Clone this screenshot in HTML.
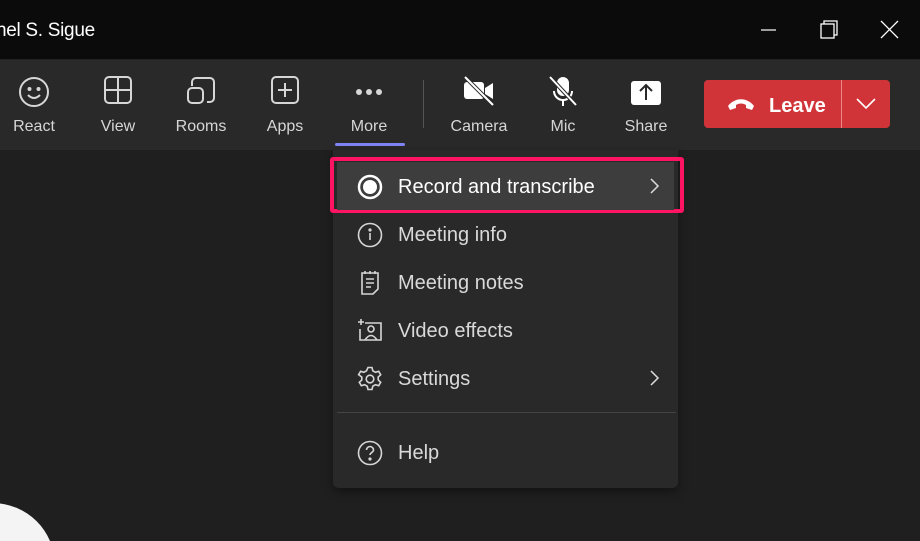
<!DOCTYPE html>
<html><head><style>
*{margin:0;padding:0;box-sizing:border-box}
html,body{width:920px;height:541px;overflow:hidden}
body{background:#1f1f1f;font-family:"Liberation Sans",sans-serif;position:relative;color:#e6e6e6}
.title{position:absolute;left:0;top:0;width:920px;height:60px;background:#0b0b0b;border-bottom:1px solid #222}
.title .t{position:absolute;left:-4px;top:20px;font-size:19px;color:#fff;letter-spacing:-0.3px}
.bar{position:absolute;left:0;top:60px;width:920px;height:90px;background:#292929}
.btn{position:absolute;top:0;width:70px;text-align:center}
.btn svg{position:absolute;top:16px;left:50%;transform:translateX(-50%)}
.btn span{position:absolute;top:58px;left:0;width:100%;font-size:16px;color:#d6d6d6}
.leave{position:absolute;left:704px;top:80px;width:186px;height:48px;background:#d13438;border-radius:4px}
.menu{position:absolute;left:333px;top:150px;width:345px;height:338px;background:#292929;border-radius:0 0 6px 6px;box-shadow:0 4px 10px rgba(0,0,0,.4)}
.item{position:absolute;left:0;width:345px;height:48px;font-size:20px;color:#d9d9d9}
.item span{position:absolute;left:65px;top:14px}
.item svg{position:absolute;left:24px;top:12px}
.item .chev{position:absolute;left:316px;top:15px}
.clip{position:absolute;left:0;top:490px;width:80px;height:51px;overflow:hidden}
</style></head><body>
<div class="title"><div class="t">hel S. Sigue</div>
<svg style="position:absolute;left:760px;top:20px" width="140" height="20"><line x1="1" y1="10" x2="16" y2="10" stroke="#fff" stroke-width="1.2"/><rect x="61" y="4" width="13" height="14" fill="none" stroke="#fff" stroke-width="1.3"/><path d="M64 4V1h13v14h-3" fill="none" stroke="#fff" stroke-width="1.3"/><path d="M121 1l17 17M138 1l-17 17" stroke="#fff" stroke-width="1.3"/></svg>
</div>
<div class="bar">
<div class="btn" style="left:-1px"><svg width="32" height="32" viewBox="0 0 32 32" fill="none" stroke="#d6d6d6" stroke-width="2"><circle cx="16" cy="16" r="14"/><circle cx="11.5" cy="13" r="1" fill="#d6d6d6"/><circle cx="20.5" cy="13" r="1" fill="#d6d6d6"/><path d="M10 19q6 6 12 0"/></svg><span>React</span></div>
<div class="btn" style="left:83px"><svg width="28" height="28" viewBox="0 0 28 28" fill="none" stroke="#d6d6d6" stroke-width="2"><rect x="1" y="1" width="26" height="26" rx="4"/><path d="M14 1v26M1 14h26"/></svg><span>View</span></div>
<div class="btn" style="left:166px"><svg width="28" height="28" viewBox="0 0 28 28" fill="none" stroke="#d6d6d6" stroke-width="2"><path d="M5 10V6a4 4 0 014-4h14a4 4 0 014 4v16a4 4 0 01-4 4h-3"/><rect x="1" y="12" width="15" height="15" rx="4"/></svg><span>Rooms</span></div>
<div class="btn" style="left:250px"><svg width="28" height="28" viewBox="0 0 28 28" fill="none" stroke="#d6d6d6" stroke-width="2"><rect x="1" y="1" width="26" height="26" rx="4"/><path d="M14 7v14M7 14h14"/></svg><span>Apps</span></div>
<div class="btn" style="left:334px"><svg width="28" height="28" viewBox="0 0 28 28" fill="#d6d6d6"><circle cx="4" cy="16" r="3"/><circle cx="14" cy="16" r="3"/><circle cx="24" cy="16" r="3"/></svg><span>More</span></div>
<div style="position:absolute;left:335px;top:83px;width:70px;height:3px;background:#7f85f5;border-radius:2px"></div>
<div style="position:absolute;left:423px;top:20px;width:1px;height:48px;background:#555"></div>
<div class="btn" style="left:444px"><svg width="32" height="30" viewBox="0 0 32 30"><rect x="1" y="6" width="20" height="17" rx="3" fill="#fff"/><path d="M22 12l8-5v16l-8-5z" fill="#fff"/><path d="M2 1l28 28" stroke="#292929" stroke-width="4"/><path d="M2 1l28 28" stroke="#fff" stroke-width="2"/></svg><span>Camera</span></div>
<div class="btn" style="left:528px"><svg width="30" height="32" viewBox="0 0 30 32" fill="none" stroke="#fff" stroke-width="2"><rect x="10" y="2" width="10" height="17" rx="5" fill="#fff"/><path d="M6 15a9 9 0 0018 0M15 24v6"/><path d="M2 1l26 28" stroke="#292929" stroke-width="4"/><path d="M2 1l26 28"/></svg><span>Mic</span></div>
<div class="btn" style="left:611px"><svg width="32" height="26" viewBox="0 0 32 26" style="top:20px"><rect x="1" y="1" width="30" height="24" rx="3" fill="#fff"/><path d="M16 20V6M10 11l6-6 6 6" stroke="#292929" stroke-width="2" fill="none"/></svg><span>Share</span></div>
</div>
<div class="leave">
<svg style="position:absolute;left:22px;top:17px" width="30" height="14" viewBox="0 0 30 14"><path d="M2 9c7-9 19-9 26 0l-2 4-6-2v-3c-3-2-7-2-10 0v3l-6 2z" fill="#fff"/></svg>
<span style="position:absolute;left:65px;top:15px;font-size:20px;font-weight:bold;color:#fff">Leave</span>
<div style="position:absolute;left:137px;top:0;width:1px;height:48px;background:#e8888a"></div>
<svg style="position:absolute;left:152px;top:18px" width="20" height="12"><path d="M1 1l9 9 9-9" fill="none" stroke="#fff" stroke-width="1.6"/></svg>
</div>
<div class="menu">
<div style="position:absolute;left:-3px;top:7px;width:354px;height:56px;border:4px solid #ff1464;border-radius:3px"></div>
<div class="item" style="top:12px;left:4px;width:337px;background:#3d3d3d"><svg width="26" height="26" viewBox="0 0 26 26" style="left:20px"><circle cx="13" cy="13" r="11" fill="none" stroke="#fff" stroke-width="2.5"/><circle cx="13" cy="13" r="7" fill="#fff"/></svg><span style="left:61px;color:#fff">Record and transcribe</span><svg class="chev" width="12" height="18" style="left:312px"><path d="M2 2l7 7-7 7" fill="none" stroke="#ddd" stroke-width="1.5"/></svg></div>
<div class="item" style="top:60px"><svg width="26" height="26" viewBox="0 0 26 26" fill="none" stroke="#d6d6d6" stroke-width="1.6"><circle cx="13" cy="13" r="11.5"/><path d="M13 11v7"/><circle cx="13" cy="8" r=".8" fill="#d6d6d6"/></svg><span>Meeting info</span></div>
<div class="item" style="top:108px"><svg width="26" height="26" viewBox="0 0 26 26" fill="none" stroke="#d6d6d6" stroke-width="1.6"><path d="M5 3h16v16l-5 5H5z"/><path d="M9 9h8M9 13h8M9 17h5M8 1v3M13 1v3M18 1v3"/></svg><span>Meeting notes</span></div>
<div class="item" style="top:156px"><svg width="26" height="26" viewBox="0 0 26 26" fill="none" stroke="#d6d6d6" stroke-width="1.6"><path d="M8 5h16v17H3V11"/><circle cx="14" cy="11" r="3"/><path d="M8 22q6-9 12 0M4 1v6M1 4h6"/></svg><span>Video effects</span></div>
<div class="item" style="top:204px"><svg width="26" height="26" viewBox="0 0 26 26" fill="none" stroke="#d6d6d6" stroke-width="1.6"><path d="M11 1.5h4l.8 3.3 2.6 1.5 3.3-1 2 3.4-2.5 2.4v2.8l2.5 2.4-2 3.4-3.3-1-2.6 1.5-.8 3.3h-4l-.8-3.3-2.6-1.5-3.3 1-2-3.4 2.5-2.4v-2.8L1.6 8.7l2-3.4 3.3 1 2.6-1.5z"/><circle cx="13" cy="13" r="3.8"/></svg><span>Settings</span><svg class="chev" width="12" height="18"><path d="M2 2l7 7-7 7" fill="none" stroke="#ddd" stroke-width="1.5"/></svg></div>
<div style="position:absolute;left:4px;top:262px;width:339px;height:1px;background:#444"></div>
<div class="item" style="top:278px"><svg width="26" height="26" viewBox="0 0 26 26" fill="none" stroke="#d6d6d6" stroke-width="1.6"><circle cx="13" cy="13" r="11.5"/><path d="M9.5 10a3.5 3.5 0 117 0c0 2.5-3.5 2.5-3.5 5"/><circle cx="13" cy="19" r=".8" fill="#d6d6d6"/></svg><span>Help</span></div>
</div>
<div class="clip"><div style="position:absolute;left:-70px;top:13px;width:125px;height:125px;border-radius:50%;background:#f4f4f4"></div></div>
</body></html>
